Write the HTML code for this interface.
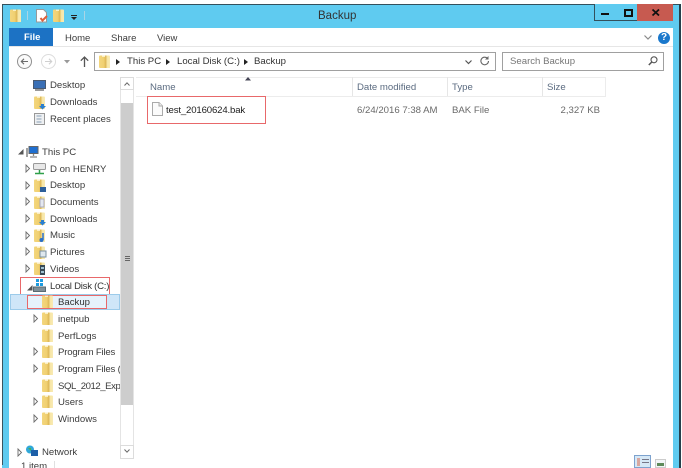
<!DOCTYPE html>
<html><head><meta charset="utf-8"><style>
html,body{margin:0;padding:0;background:#fff}
#w{position:relative;width:682px;height:468px;overflow:hidden;background:#fff;font:9.6px "Liberation Sans",sans-serif;color:#3c3c3c}
#w div{position:absolute}
.t{white-space:nowrap;line-height:12px;height:12px;filter:blur(.25px)}
svg{position:absolute;overflow:visible}
svg.i{filter:blur(.35px)}
</style></head><body><div id="w">
<svg width="0" height="0" style="position:absolute"><defs>
<linearGradient id="g" x1="0" x2="1" y1="0" y2="0"><stop offset="0" stop-color="#f3d77e"/><stop offset=".45" stop-color="#f0cf70"/><stop offset=".6" stop-color="#dcb655"/><stop offset=".75" stop-color="#f7e6a6"/><stop offset="1" stop-color="#f8eab4"/></linearGradient>
<g id="f"><path d="M0 1.500Q0 .5 1 .5h9q1 0 1 1V13H1q-1 0-1-1z" fill="url(#g)"/><path d="M3 .5h3v1.500H3z" fill="#fbeec0"/></g>
<path id="a" d="M0 0l3.500 3.500L0 7z" fill="#fff" stroke="#6b6b6b" stroke-width=".9"/>
</defs></svg>

<!-- window frame -->
<div style="left:2px;top:4px;width:678px;height:464px;background:#5fcbf0"></div>
<div style="left:2px;top:4px;width:1px;height:461px;background:#3a5560"></div>
<div style="left:2px;top:4px;width:678px;height:1px;background:#33505c"></div>
<div style="left:679px;top:4px;width:2px;height:464px;background:#26404c"></div>
<div style="left:9px;top:28px;width:664px;height:440px;background:#fff"></div>

<!-- title bar icons -->
<svg class="i" style="left:10px;top:9px" width="12" height="14"><use href="#f"/></svg>
<div style="left:27px;top:11px;width:1px;height:9px;background:#a9d5e6"></div>
<svg class="i" style="left:36px;top:9px" width="12" height="14"><path d="M.5.500h7l3 3V13H.5z" fill="#fff" stroke="#999"/><path d="M4.500 9l2 2.500L11 7" fill="none" stroke="#e0603a" stroke-width="2"/></svg>
<svg class="i" style="left:53px;top:9px" width="12" height="14"><use href="#f"/></svg>
<div style="left:71px;top:15px;width:6px;height:1px;background:#222"></div>
<svg style="left:71px;top:17px" width="6" height="3"><path d="M0 0h6L3 3z" fill="#222"/></svg>
<div style="left:84px;top:11px;width:1px;height:9px;background:#a9d5e6"></div>
<div class="t" style="left:318px;top:10px;font-size:11.500px;color:#333">Backup</div>

<!-- window controls -->
<div style="left:594px;top:4px;width:22px;height:16px;border:1px solid #33505c;border-top:0;background:#5fcbf0"></div>
<div style="left:601px;top:13px;width:8px;height:2px;background:#111"></div>
<div style="left:617px;top:4px;width:20px;height:16px;border:1px solid #33505c;border-top:0;border-left:0;background:#5fcbf0"></div>
<div style="left:624px;top:9px;width:5px;height:4px;border:2px solid #111"></div>
<div style="left:637px;top:4px;width:36px;height:17px;background:#c75a50"></div>
<svg style="left:652px;top:9px" width="8" height="7"><path d="M.500.500l6.500 6M7 .500L.500 6.500" stroke="#111" stroke-width="1.800"/></svg>

<!-- ribbon -->
<div style="left:9px;top:28px;width:44px;height:18px;background:#1c72c4"></div>
<div class="t" style="left:24px;top:32px;color:#fff;font-weight:bold;font-size:9.500px">File</div>
<div class="t" style="left:65px;top:32.500px;font-size:9.500px">Home</div>
<div class="t" style="left:111px;top:32.500px;font-size:9.500px">Share</div>
<div class="t" style="left:157px;top:32.500px;font-size:9.500px">View</div>
<div style="left:9px;top:46px;width:664px;height:1px;background:#e6e6e6"></div>
<svg style="left:644px;top:35px" width="8" height="5"><path d="M.500.500L4 4 7.500.500" fill="none" stroke="#8a8a8a" stroke-width="1.200"/></svg>
<div style="left:658px;top:32px;width:12px;height:12px;border-radius:50%;background:#1a78cc;color:#fff;font:bold 10px/12px 'Liberation Sans',sans-serif;text-align:center">?</div>

<!-- nav buttons -->
<svg class="i" style="left:17px;top:54px" width="16" height="16"><circle cx="7.500" cy="7.500" r="7" fill="#fafafa" stroke="#8f8f8f"/><path d="M11 7.500H4.500M7 4.800L4.300 7.500 7 10.200" fill="none" stroke="#6a6a6a" stroke-width="1.100"/></svg>
<svg class="i" style="left:41px;top:54px" width="16" height="16"><circle cx="7.500" cy="7.500" r="7" fill="#fff" stroke="#dcdcdc"/><path d="M4 7.500h6.500M8 4.800l2.700 2.700L8 10.200" fill="none" stroke="#d0d0d0" stroke-width="1.100"/></svg>
<svg style="left:64px;top:60px" width="6" height="4"><path d="M0 0h6L3 3.500z" fill="#999"/></svg>
<svg class="i" style="left:80px;top:56px" width="9" height="11"><path d="M4.500 11V1M.8 4.700L4.500 1l3.700 3.700" fill="none" stroke="#555" stroke-width="1.300"/></svg>

<!-- address bar -->
<div style="left:94px;top:52px;width:400px;height:17px;border:1px solid #a0a0a0;background:#fff"></div>
<svg class="i" style="left:99px;top:55px" width="12" height="14"><use href="#f"/></svg>
<svg style="left:116px;top:59px" width="4" height="6"><path d="M0 0l4 3-4 3z" fill="#222"/></svg>
<div class="t" style="left:127px;top:56px;color:#333">This PC</div>
<svg style="left:166px;top:59px" width="4" height="6"><path d="M0 0l4 3-4 3z" fill="#222"/></svg>
<div class="t" style="left:177px;top:56px;color:#333">Local Disk (C:)</div>
<svg style="left:244px;top:59px" width="4" height="6"><path d="M0 0l4 3-4 3z" fill="#222"/></svg>
<div class="t" style="left:254px;top:56px;color:#333">Backup</div>
<svg style="left:465px;top:60px" width="7" height="5"><path d="M.500.500L3.500 3.500 6.500.500" fill="none" stroke="#555" stroke-width="1.200"/></svg>
<svg class="i" style="left:480px;top:56px" width="10" height="10"><path d="M8.500 5a3.800 3.800 0 1 1-1.200-2.800" fill="none" stroke="#666" stroke-width="1.100"/><path d="M8.500 0v3.500H5z" fill="#666"/></svg>

<!-- search -->
<div style="left:502px;top:52px;width:160px;height:17px;border:1px solid #a0a0a0;background:#fff"></div>
<div class="t" style="left:510px;top:56px;color:#777">Search Backup</div>
<svg class="i" style="left:648px;top:56px" width="10" height="10"><circle cx="6" cy="3.800" r="3" fill="none" stroke="#555" stroke-width="1.100"/><path d="M3.800 6L.8 9" stroke="#555" stroke-width="1.500"/></svg>

<!-- nav pane scrollbar -->
<div style="left:120px;top:77px;width:14px;height:382px;background:#fff;border-left:1px solid #e4e4e4;border-right:1px solid #e4e4e4;box-sizing:border-box"></div>
<div style="left:121px;top:103px;width:12px;height:302px;background:#cdcdcd"></div>
<div style="left:120px;top:77px;width:14px;height:13px;border:1px solid #dcdcdc;box-sizing:border-box;background:#fff"></div>
<svg style="left:124px;top:82px" width="6" height="4"><path d="M.500 3.500L3 .8l2.500 2.700" fill="none" stroke="#666"/></svg>
<div style="left:120px;top:445px;width:14px;height:14px;border:1px solid #dcdcdc;box-sizing:border-box;background:#fff"></div>
<svg style="left:124px;top:449px" width="6" height="4"><path d="M.500.500L3 3.200 5.500.500" fill="none" stroke="#666"/></svg>
<div style="left:125px;top:256px;width:5px;height:5px;border-top:1px solid #666;border-bottom:1px solid #666;box-sizing:border-box"></div>
<div style="left:125px;top:258px;width:5px;height:1px;background:#666"></div>

<!-- nav: favorites -->
<svg class="i" style="left:33px;top:80px" width="13" height="11"><rect x=".5" y=".5" width="12" height="8" fill="#3a6fb5" stroke="#4a5a70"/><path d="M2 10h9" stroke="#777" stroke-width="1.500"/></svg>
<div class="t" style="left:50px;top:80px">Desktop</div>
<svg class="i" style="left:34px;top:96px" width="12" height="14"><use href="#f"/><path d="M7 8h3v2h2l-3.500 3.500L5 10h2z" fill="#2a7fd0"/></svg>
<div class="t" style="left:50px;top:97px">Downloads</div>
<svg class="i" style="left:34px;top:113px" width="12" height="12"><rect x=".5" y=".5" width="10" height="11" fill="#eef0f2" stroke="#999"/><path d="M2.500 3h5M2.500 6h5M2.500 9h5" stroke="#8aa0b5"/></svg>
<div class="t" style="left:50px;top:113.500px">Recent places</div>

<!-- This PC -->
<svg style="left:18px;top:149px" width="6" height="6"><path d="M5.500 0v5.500H0z" fill="#555"/></svg>
<svg class="i" style="left:26px;top:146px" width="13" height="13"><rect x="3" y=".5" width="9" height="7" fill="#1f6fd0" stroke="#666"/><path d="M7.500 8v2M4 11h7" stroke="#888" stroke-width="1.300"/><path d="M1 2v9" stroke="#8a8a8a" stroke-width="1.600"/></svg>
<div class="t" style="left:42px;top:147px">This PC</div>

<svg style="left:26px;top:165px" width="5" height="8"><use href="#a"/></svg>
<svg class="i" style="left:33px;top:163px" width="13" height="12"><rect x=".5" y=".5" width="12" height="6" rx="1" fill="#e8e8e8" stroke="#999"/><path d="M6.500 7v3M2 10.500h9" stroke="#2fa04a" stroke-width="1.500"/></svg>
<div class="t" style="left:50px;top:164px">D on HENRY</div>

<svg style="left:26px;top:182px" width="5" height="8"><use href="#a"/></svg>
<svg class="i" style="left:34px;top:179px" width="12" height="14"><use href="#f"/><rect x="6" y="8" width="6" height="5" fill="#2d5f9a"/></svg>
<div class="t" style="left:50px;top:180px">Desktop</div>

<svg style="left:26px;top:198px" width="5" height="8"><use href="#a"/></svg>
<svg class="i" style="left:34px;top:196px" width="12" height="14"><use href="#f"/><rect x="6" y="3" width="4" height="8" fill="#e4e8f0" stroke="#aab"/></svg>
<div class="t" style="left:50px;top:197px">Documents</div>

<svg style="left:26px;top:215px" width="5" height="8"><use href="#a"/></svg>
<svg class="i" style="left:34px;top:212px" width="12" height="14"><use href="#f"/><path d="M7 8h3v2h2l-3.500 3.500L5 10h2z" fill="#2a7fd0"/></svg>
<div class="t" style="left:50px;top:214px">Downloads</div>

<svg style="left:26px;top:232px" width="5" height="8"><use href="#a"/></svg>
<svg class="i" style="left:34px;top:229px" width="12" height="14"><use href="#f"/><path d="M9 4v7" stroke="#2a70c8" stroke-width="1.500"/><circle cx="7.500" cy="11" r="2" fill="#2a70c8"/></svg>
<div class="t" style="left:50px;top:230px">Music</div>

<svg style="left:26px;top:248px" width="5" height="8"><use href="#a"/></svg>
<svg class="i" style="left:34px;top:246px" width="12" height="14"><use href="#f"/><rect x="6" y="5" width="6" height="6" fill="#dfe8ee" stroke="#7a90a0"/></svg>
<div class="t" style="left:50px;top:247px">Pictures</div>

<svg style="left:26px;top:265px" width="5" height="8"><use href="#a"/></svg>
<svg class="i" style="left:34px;top:262px" width="12" height="14"><use href="#f"/><rect x="6" y="3" width="5" height="10" fill="#3a4a55"/><rect x="7" y="5" width="3" height="2" fill="#9fc0d0"/><rect x="7" y="9" width="3" height="2" fill="#9fc0d0"/></svg>
<div class="t" style="left:50px;top:264px">Videos</div>

<!-- Local disk -->
<svg style="left:27px;top:285px" width="6" height="6"><path d="M5.500 0v5.500H0z" fill="#555"/></svg>
<svg class="i" style="left:33px;top:279px" width="13" height="14"><rect x="3" y="0" width="3" height="3" fill="#1c9be0"/><rect x="7" y="0" width="3" height="3" fill="#1c9be0"/><rect x="3" y="4" width="3" height="3" fill="#1c9be0"/><rect x="7" y="4" width="3" height="3" fill="#1c9be0"/><rect x=".5" y="8" width="12" height="4.500" fill="#7f9098" stroke="#5a6a72"/></svg>
<div class="t" style="left:50px;top:280.500px;color:#333;letter-spacing:-.25px">Local Disk (C:)</div>
<div style="left:20px;top:277px;width:90px;height:18px;border:1px solid #e8686a;box-sizing:border-box"></div>

<!-- Backup row -->
<div style="left:10px;top:294px;width:110px;height:16px;background:#cfe6f8;border:1px solid #9ccbea;box-sizing:border-box"></div>
<div style="left:27px;top:295px;width:80px;height:14px;background:#e6f2fb;border:1px solid #e8686a;box-sizing:border-box"></div>
<svg class="i" style="left:42px;top:295px" width="12" height="14"><use href="#f"/></svg>
<div class="t" style="left:58px;top:297px;color:#333">Backup</div>

<svg style="left:34px;top:315px" width="5" height="8"><use href="#a"/></svg>
<svg class="i" style="left:42px;top:312px" width="12" height="14"><use href="#f"/></svg>
<div class="t" style="left:58px;top:314px">inetpub</div>

<svg class="i" style="left:42px;top:329px" width="12" height="14"><use href="#f"/></svg>
<div class="t" style="left:58px;top:331px">PerfLogs</div>

<svg style="left:34px;top:348px" width="5" height="8"><use href="#a"/></svg>
<svg class="i" style="left:42px;top:345px" width="12" height="14"><use href="#f"/></svg>
<div class="t" style="left:58px;top:347px;letter-spacing:-.2px">Program Files</div>

<svg style="left:34px;top:365px" width="5" height="8"><use href="#a"/></svg>
<svg class="i" style="left:42px;top:362px" width="12" height="14"><use href="#f"/></svg>
<div class="t" style="left:58px;top:364px;width:62px;overflow:hidden;letter-spacing:-.2px">Program Files (x86)</div>

<svg class="i" style="left:42px;top:379px" width="12" height="14"><use href="#f"/></svg>
<div class="t" style="left:58px;top:381px;width:62px;overflow:hidden;letter-spacing:-.45px">SQL_2012_Exp_x64</div>

<svg style="left:34px;top:398px" width="5" height="8"><use href="#a"/></svg>
<svg class="i" style="left:42px;top:395px" width="12" height="14"><use href="#f"/></svg>
<div class="t" style="left:58px;top:397px">Users</div>

<svg style="left:34px;top:415px" width="5" height="8"><use href="#a"/></svg>
<svg class="i" style="left:42px;top:412px" width="12" height="14"><use href="#f"/></svg>
<div class="t" style="left:58px;top:414px">Windows</div>

<svg style="left:18px;top:449px" width="5" height="8"><use href="#a"/></svg>
<svg class="i" style="left:25px;top:445px" width="13" height="12"><circle cx="5" cy="4.500" r="4" fill="#30a8d8"/><path d="M3 3l3 0 0 3z" fill="#4fae4f"/><rect x="6" y="5" width="7" height="6" fill="#1d5fa8"/></svg>
<div class="t" style="left:42px;top:447px">Network</div>

<div class="t" style="left:21px;top:461px">1 item</div>
<div style="left:54px;top:461px;width:1px;height:7px;background:#e0e0e0"></div>

<!-- file headers -->
<div style="left:136px;top:77px;width:470px;height:1px;background:#ececec"></div>
<div style="left:136px;top:96px;width:470px;height:1px;background:#ececec"></div>
<svg style="left:245px;top:77px" width="6" height="4"><path d="M0 3.500L3 0l3 3.500z" fill="#445"/></svg>
<div class="t" style="left:150px;top:81.500px;color:#5b6b80">Name</div>
<div style="left:352px;top:77px;width:1px;height:19px;background:#e6e6e6"></div>
<div class="t" style="left:357px;top:81.500px;color:#5b6b80">Date modified</div>
<div style="left:447px;top:77px;width:1px;height:19px;background:#e6e6e6"></div>
<div class="t" style="left:452px;top:81.500px;color:#5b6b80">Type</div>
<div style="left:542px;top:77px;width:1px;height:19px;background:#e6e6e6"></div>
<div class="t" style="left:547px;top:81.500px;color:#5b6b80">Size</div>
<div style="left:605px;top:77px;width:1px;height:19px;background:#ececec"></div>

<!-- file row -->
<svg class="i" style="left:152px;top:102px" width="11" height="14"><path d="M.500.500h6.500l3.500 3.500v9.500H.500z" fill="#fbfbfb" stroke="#aaa"/><path d="M7 .500V4h3.500" fill="#eee" stroke="#aaa"/></svg>
<div class="t" style="left:166px;top:104.500px;color:#222;letter-spacing:-.15px">test_20160624.bak</div>
<div style="left:147px;top:96px;width:119px;height:28px;border:1px solid #e8686a;box-sizing:border-box"></div>
<div class="t" style="left:357px;top:104.500px;color:#6a6a6a">6/24/2016 7:38 AM</div>
<div class="t" style="left:452px;top:104.500px;color:#6a6a6a">BAK File</div>
<div class="t" style="left:540px;top:104.500px;width:60px;text-align:right;color:#6a6a6a">2,327 KB</div>

<!-- view buttons -->
<div style="left:634px;top:455px;width:17px;height:13px;background:#d6e8f6;border:1px solid #7da2ce;box-sizing:border-box"></div>
<div style="left:637px;top:458px;width:3px;height:8px;background:#d8a8a0"></div>
<div style="left:642px;top:459px;width:7px;height:1px;background:#778"></div>
<div style="left:642px;top:462px;width:7px;height:1px;background:#778"></div>
<div style="left:655px;top:459px;width:11px;height:9px;background:#f2f5f7;border:1px solid #ccc;box-sizing:border-box"></div>
<div style="left:657px;top:463px;width:7px;height:3px;background:#5d8a5a"></div>
</div></body></html>
